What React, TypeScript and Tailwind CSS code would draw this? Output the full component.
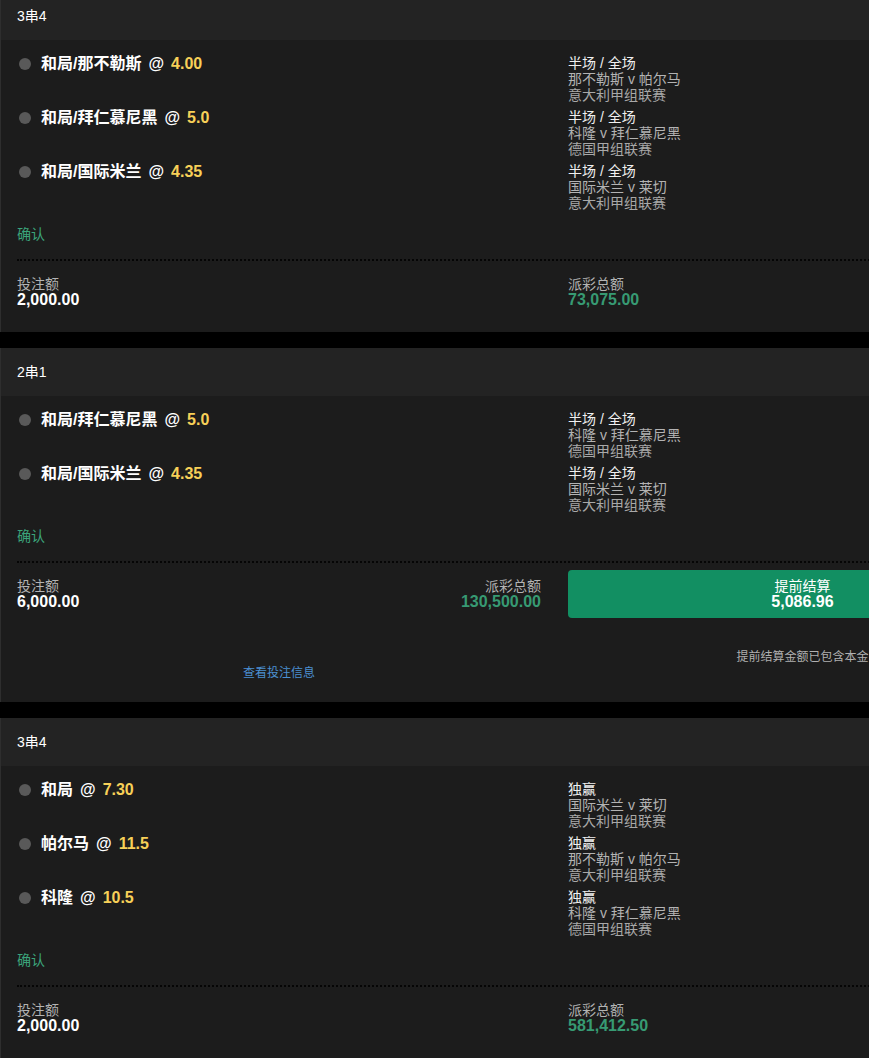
import React from "react";

type Sel = { title: string; odds: string; market: string; match: string; league: string };

const FONT = { fontFamily: '"Liberation Sans", "Noto Sans CJK SC", Arial, sans-serif' };

function Selection({ s }: { s: Sel }) {
  return (
    <div className="flex">
      <div className="w-[524px] flex items-center h-4 mt-[1px] pl-[2px] gap-[10px]">
        <span className="w-3 h-3 rounded-full bg-[#595959] shrink-0" />
        <div className="flex items-center gap-[7px] text-[16px] leading-[16px] font-bold text-white whitespace-nowrap">
          <span>{s.title}</span>
          <span>@</span>
          <span className="text-[#f7d058]">{s.odds}</span>
        </div>
      </div>
      <div className="ml-[27px] flex-1 text-[14px] leading-[16px] whitespace-nowrap">
        <div className="text-[#f0f0f0]">{s.market}</div>
        <div className="text-[#b3b3b3]">{s.match}</div>
        <div className="text-[#a8a8a8]">{s.league}</div>
      </div>
    </div>
  );
}

function Card({
  type,
  sels,
  stake,
  payout,
  cashout,
}: {
  type: string;
  sels: Sel[];
  stake: string;
  payout: string;
  cashout?: string;
}) {
  return (
    <div className="border-l border-[#2e2e2e] bg-[#1c1c1c]">
      <div className="h-12 bg-[#232323] px-4 flex items-center text-[14px] text-white">{type}</div>
      <div className="px-4 pt-[15px] pb-4">
        <div className="flex flex-col gap-[6px]">
          {sels.map((s, i) => (
            <Selection key={i} s={s} />
          ))}
        </div>
        <div className="mt-[15px] text-[14px] leading-[16px] text-[#3ba47b]">确认</div>
        <div className="mt-[17px] border-t-2 border-dotted border-[#050505]" />
        {cashout ? (
          <>
            <div className="mt-[7px] flex h-12 items-center">
              <div className="w-[524px] flex items-center justify-between">
                <div>
                  <div className="text-[14px] leading-[16px] text-[#b3b3b3]">投注额</div>
                  <div className="text-[16px] leading-[16px] font-bold text-white">{stake}</div>
                </div>
                <div className="text-right">
                  <div className="text-[14px] leading-[16px] text-[#b3b3b3]">派彩总额</div>
                  <div className="text-[16px] leading-[16px] font-bold text-[#379a73]">{payout}</div>
                </div>
              </div>
              <div className="ml-[27px] flex-1 h-12 rounded-[4px] bg-[#128f62] flex flex-col items-center justify-center">
                <div className="text-[14px] leading-[16px] text-white">提前结算</div>
                <div className="text-[16px] leading-[16px] font-bold text-white">{cashout}</div>
              </div>
            </div>
            <div className="mt-[31px] flex pb-[5px]">
              <div className="w-[524px] flex justify-center pt-4">
                <span className="text-[12px] leading-[16px] text-[#4b8fd1]">查看投注信息</span>
              </div>
              <div className="ml-[27px] flex-1 flex justify-center">
                <span className="text-[12px] leading-[16px] text-[#b0b0b0]">提前结算金额已包含本金</span>
              </div>
            </div>
          </>
        ) : (
          <div className="mt-[7px] flex h-12 items-center">
            <div className="w-[524px]">
              <div className="text-[14px] leading-[16px] text-[#b3b3b3]">投注额</div>
              <div className="text-[16px] leading-[16px] font-bold text-white">{stake}</div>
            </div>
            <div className="ml-[27px] flex-1">
              <div className="text-[14px] leading-[16px] text-[#b3b3b3]">派彩总额</div>
              <div className="text-[16px] leading-[16px] font-bold text-[#379a73]">{payout}</div>
            </div>
          </div>
        )}
      </div>
    </div>
  );
}

const napoli: Sel = { title: "和局/那不勒斯", odds: "4.00", market: "半场 / 全场", match: "那不勒斯 v 帕尔马", league: "意大利甲组联赛" };
const bayern: Sel = { title: "和局/拜仁慕尼黑", odds: "5.0", market: "半场 / 全场", match: "科隆 v 拜仁慕尼黑", league: "德国甲组联赛" };
const inter: Sel = { title: "和局/国际米兰", odds: "4.35", market: "半场 / 全场", match: "国际米兰 v 莱切", league: "意大利甲组联赛" };

export default function App() {
  return (
    <div className="w-[869px] h-[1058px] overflow-hidden bg-black" style={FONT}>
      <div className="w-[1053px] -mt-2 flex flex-col gap-4">
        <Card type="3串4" sels={[napoli, bayern, inter]} stake="2,000.00" payout="73,075.00" />
        <Card type="2串1" sels={[bayern, inter]} stake="6,000.00" payout="130,500.00" cashout="5,086.96" />
        <Card
          type="3串4"
          sels={[
            { title: "和局", odds: "7.30", market: "独赢", match: "国际米兰 v 莱切", league: "意大利甲组联赛" },
            { title: "帕尔马", odds: "11.5", market: "独赢", match: "那不勒斯 v 帕尔马", league: "意大利甲组联赛" },
            { title: "科隆", odds: "10.5", market: "独赢", match: "科隆 v 拜仁慕尼黑", league: "德国甲组联赛" },
          ]}
          stake="2,000.00"
          payout="581,412.50"
        />
      </div>
    </div>
  );
}
